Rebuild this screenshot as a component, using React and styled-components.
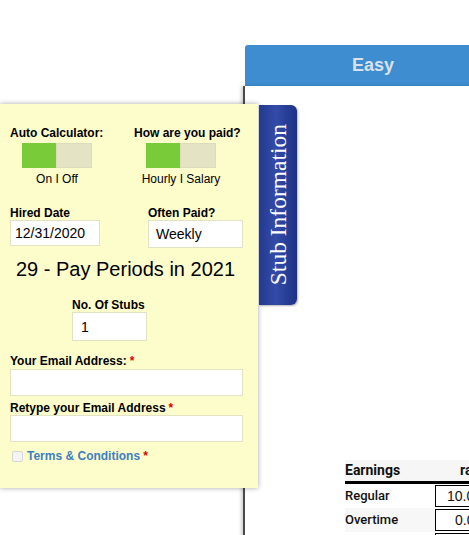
import styled, { createGlobalStyle } from 'styled-components';

const GlobalStyle = createGlobalStyle`
  * { box-sizing: border-box; }
  body {
    margin: 0;
    background: #fff;
    font-family: "Liberation Sans", Arial, sans-serif;
    overflow: hidden;
  }
`;

const Page = styled.div`
  position: relative;
  width: 469px;
  height: 535px;
  overflow: hidden;
  padding: 45px 0 0 243px;
`;

const Card = styled.div`
  display: flex;
  flex-direction: column;
  width: 300px;
  min-height: 490px;
`;

const CardHeader = styled.div`
  flex-shrink: 0;
  height: 41px;
  margin-left: 2px;
  background: #3e8dd0;
  border-top-left-radius: 3px;
  color: #d9e1ea;
  font-size: 18px;
  font-weight: bold;
  display: flex;
  align-items: center;
  padding-left: 107px;
`;

const CardBody = styled.div`
  flex: 1;
  border-left: 2px solid #4a4a4a;
  box-shadow: -2px 0 3px rgba(0, 0, 0, 0.18);
  padding: 374px 0 0 100px;
`;

const Table = styled.table`
  border-collapse: collapse;
  font-family: Roboto, "Liberation Sans", sans-serif;
  font-size: 13px;
  color: #111;
  width: 200px;
`;

const HeadCell = styled.th`
  text-align: left;
  font-size: 14px;
  font-weight: bold;
  height: 22px;
  padding: 0 0 0 ${(p) => p.$pad || 0}px;
  background: #f6f6f6;
  border-bottom: 3px solid #000;
`;

const Row = styled.tr`
  background: ${(p) => (p.$alt ? '#f7f7f7' : '#fff')};
`;

const LabelCell = styled.td`
  height: 24px;
  font-weight: 500;
  padding: 0;
  width: 90px;
`;

const ValueCell = styled.td`
  padding: 1px 0;
`;

const ValueBox = styled.div`
  width: 100px;
  height: 22px;
  border: 1px solid #000;
  background: #fff;
  font-size: 14px;
  font-family: "Liberation Sans", Arial, sans-serif;
  line-height: 20px;
  padding-left: ${(p) => p.$pad}px;
`;

const Panel = styled.div`
  position: absolute;
  left: 0;
  top: 104px;
  width: 258px;
  height: 384px;
  background: #fdfdcc;
  box-shadow: 0 0 5px rgba(0, 0, 0, 0.35);
  padding: 22px 15px 0 10px;
  color: #000;
`;

const Tab = styled.div`
  position: absolute;
  left: 259px;
  top: 105px;
  width: 38px;
  height: 200px;
  border-radius: 0 6px 6px 0;
  background: linear-gradient(to right, #243990, #334ca8 45%, #1d3185);
  box-shadow: 1px 1px 2px rgba(0, 0, 0, 0.3);
  display: flex;
  align-items: center;
  justify-content: center;
`;

const TabText = styled.span`
  writing-mode: vertical-rl;
  transform: rotate(180deg);
  color: #fff;
  font-family: "Liberation Serif", "Times New Roman", serif;
  font-size: 23.5px;
  white-space: nowrap;
`;

const TwoCols = styled.div`
  display: grid;
  grid-template-columns: ${(p) => p.$cols};
  margin-top: ${(p) => p.$top || 0}px;
`;

const Group = styled.div`
  display: flex;
  flex-direction: column;
  align-items: flex-start;
`;

const Label = styled.div`
  font-size: 12px;
  font-weight: bold;
  line-height: 14px;
  white-space: nowrap;
`;

const Required = styled.span`
  color: #d00;
  margin-left: 3px;
`;

const Toggle = styled.div`
  display: flex;
  width: 70px;
  height: 25px;
  margin: 3px 0 0 12px;
`;

const ToggleHalf = styled.div`
  flex: 1;
  background: ${(p) => (p.$on ? '#7acb3a' : '#e4e4c4')};
  border: ${(p) => (p.$on ? 'none' : '1px solid #dcdcbc')};
`;

const ToggleCaption = styled.div`
  font-size: 12px;
  margin-top: 4px;
  width: 94px;
  text-align: center;
`;

const Field = styled.div`
  width: ${(p) => p.$w}px;
  height: ${(p) => p.$h || 27}px;
  background: #fff;
  border: 1px solid #e2e2c4;
  margin-top: ${(p) => p.$mt || 0}px;
  font-size: 14px;
  display: flex;
  align-items: center;
  padding-left: ${(p) => p.$pl || 4}px;
`;

const Periods = styled.div`
  font-size: 20px;
  line-height: 23px;
  text-align: center;
  margin: 10px 0 0 -2px;
`;

const Stubs = styled(Group)`
  margin: 17px 0 0 62px;
`;

const Block = styled.div`
  margin-top: ${(p) => p.$top}px;
`;

const TermsRow = styled.div`
  display: flex;
  align-items: center;
  height: 12px;
  margin: 8px 0 0 2px;
  font-size: 12px;
  font-weight: bold;
`;

const Check = styled.span`
  width: 11px;
  height: 11px;
  border: 1px solid #d6d6d6;
  border-radius: 2px;
  background: #f4f4f4;
  margin-right: 4px;
`;

const TermsLink = styled.span`
  color: #3b80c2;
`;

export default function App() {
  return (
    <>
      <GlobalStyle />
      <Page>
        <Card>
          <CardHeader>Easy</CardHeader>
          <CardBody>
            <Table>
              <thead>
                <tr>
                  <HeadCell>Earnings</HeadCell>
                  <HeadCell $pad={25}>rate</HeadCell>
                </tr>
              </thead>
              <tbody>
                <Row>
                  <LabelCell>Regular</LabelCell>
                  <ValueCell>
                    <ValueBox $pad={11}>10.00</ValueBox>
                  </ValueCell>
                </Row>
                <Row $alt>
                  <LabelCell>Overtime</LabelCell>
                  <ValueCell>
                    <ValueBox $pad={19}>0.00</ValueBox>
                  </ValueCell>
                </Row>
                <Row>
                  <LabelCell>Holiday</LabelCell>
                  <ValueCell>
                    <ValueBox $pad={19}>0.00</ValueBox>
                  </ValueCell>
                </Row>
              </tbody>
            </Table>
          </CardBody>
        </Card>

        <Panel>
          <TwoCols $cols="124px 1fr">
            <Group>
              <Label>Auto Calculator:</Label>
              <Toggle>
                <ToggleHalf $on />
                <ToggleHalf />
              </Toggle>
              <ToggleCaption>On I Off</ToggleCaption>
            </Group>
            <Group>
              <Label>How are you paid?</Label>
              <Toggle>
                <ToggleHalf $on />
                <ToggleHalf />
              </Toggle>
              <ToggleCaption>Hourly I Salary</ToggleCaption>
            </Group>
          </TwoCols>

          <TwoCols $cols="138px 1fr" $top={20}>
            <Group>
              <Label>Hired Date</Label>
              <Field $w={90} $h={26}>12/31/2020</Field>
            </Group>
            <Group>
              <Label>Often Paid?</Label>
              <Field $w={95} $h={28} $pl={7}>Weekly</Field>
            </Group>
          </TwoCols>

          <Periods>29 - Pay Periods in 2021</Periods>

          <Stubs>
            <Label>No. Of Stubs</Label>
            <Field $w={75} $h={29} $pl={8}>1</Field>
          </Stubs>

          <Block $top={13}>
            <Label>
              Your Email Address:<Required>*</Required>
            </Label>
            <Field $w={233} $h={27} $mt={1} />
          </Block>

          <Block $top={5}>
            <Label>
              Retype your Email Address<Required>*</Required>
            </Label>
            <Field $w={233} $h={27} />
          </Block>

          <TermsRow>
            <Check />
            <TermsLink>Terms &amp; Conditions</TermsLink>
            <Required>*</Required>
          </TermsRow>
        </Panel>

        <Tab>
          <TabText>Stub Information</TabText>
        </Tab>
      </Page>
    </>
  );
}
